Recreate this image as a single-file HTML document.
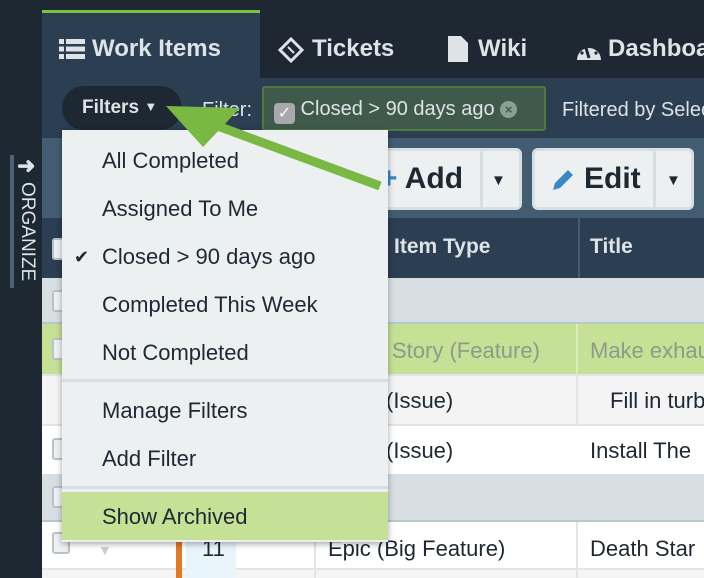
<!DOCTYPE html>
<html><head><style>
*{margin:0;padding:0;box-sizing:border-box}
html,body{width:704px;height:578px;overflow:hidden}
body{background:#1e2832;font-family:"Liberation Sans",Arial,sans-serif}
#w{position:relative;width:704px;height:578px;overflow:hidden}
.a{position:absolute}
.tab{position:absolute;top:35px;font-size:24px;font-weight:bold;color:#dde3e6;white-space:nowrap}
.mi{position:absolute;left:102px;font-size:22px;color:#1e2832;white-space:nowrap}
.cell{position:absolute;font-size:22px;white-space:nowrap;color:#1e2832}
.cb{position:absolute;left:52px;width:18px;height:22px;border:2px solid #b9c2c7;border-radius:3px;background:#eef1f2}
</style></head><body><div id="w">
<div class="a" style="left:10px;top:155px;width:4px;height:133px;background:#4a6478"></div>
<div class="a" style="left:17px;top:153px;font-size:22px;color:#dde3e6;font-weight:bold">➜</div>
<div class="a" style="left:14px;top:182px;width:24px;transform-origin:0 0;transform:translate(24px,0) rotate(90deg);font-size:19px;color:#dde3e6;white-space:nowrap">ORGANIZE</div>

<div class="a" style="left:42px;top:10px;width:218px;height:68px;background:#2b3e52;border-top:3px solid #7bc143"></div>
<svg class="a" style="left:59px;top:39px" width="26" height="20"><g fill="#dde3e6"><rect x="0" y="0" width="5" height="5"/><rect x="7" y="0" width="19" height="5"/><rect x="0" y="7.5" width="5" height="5"/><rect x="7" y="7.5" width="19" height="5"/><rect x="0" y="15" width="5" height="5"/><rect x="7" y="15" width="19" height="5"/></g></svg>
<div class="tab" style="left:92px">Work Items</div>
<svg class="a" style="left:278px;top:37px" width="26" height="26"><path d="M13 2 L24 13 L13 24 L2 13 Z" fill="none" stroke="#dde3e6" stroke-width="3"/><path d="M10 10 L16 16" stroke="#dde3e6" stroke-width="2"/></svg>
<div class="tab" style="left:312px">Tickets</div>
<svg class="a" style="left:448px;top:36px" width="20" height="26"><path d="M0 0 H13 L20 7 V26 H0 Z" fill="#dde3e6"/></svg>
<div class="tab" style="left:478px">Wiki</div>
<svg class="a" style="left:576px;top:39px" width="26" height="22"><path d="M1 21 A12 12 0 1 1 25 21 Z" fill="#dde3e6"/><path d="M13 19 L10 9" stroke="#1e2832" stroke-width="3"/><circle cx="6" cy="14" r="1.6" fill="#1e2832"/><circle cx="20" cy="14" r="1.6" fill="#1e2832"/><circle cx="17" cy="7" r="1.6" fill="#1e2832"/></svg>
<div class="tab" style="left:608px">Dashboards</div>

<div class="a" style="left:42px;top:78px;width:662px;height:60px;background:#2b3e52"></div>
<div class="a" style="left:62px;top:86px;width:120px;height:44px;background:#1e2832;border-radius:22px;color:#dde3e6;font-weight:bold;font-size:19px;padding:11px 0 0 20px">Filters <span style="font-size:13px;vertical-align:2px">▼</span></div>
<div class="a" style="left:202px;top:99px;font-size:20px;color:#dde3e6">Filter:</div>
<div class="a" style="left:262px;top:86px;width:284px;height:45px;background:#3f5a4a;border:2px solid #4e7a3e;border-radius:3px;color:#dde3e6;font-size:20px;padding:10px 0 0 10px;white-space:nowrap"><span style="display:inline-block;width:21px;height:21px;background:#a9a9ad;border-radius:4px;color:#fff;font-size:16px;text-align:center;line-height:21px;vertical-align:-3px">✓</span> Closed &gt; 90 days ago <span style="display:inline-block;width:17px;height:17px;border-radius:50%;background:#8aa092;color:#3f5a4a;font-size:13px;text-align:center;line-height:17px;font-weight:bold;vertical-align:1px">×</span></div>
<div class="a" style="left:562px;top:99px;font-size:20px;color:#dde3e6;white-space:nowrap">Filtered by Selection</div>

<div class="a" style="left:42px;top:138px;width:662px;height:80px;background:#425d72"></div>
<div class="a" style="left:330px;top:148px;width:192px;height:62px;background:#edf0f1;border:3px solid #d7dfe2;border-radius:6px"></div>
<div class="a" style="left:480px;top:151px;width:3px;height:56px;background:#d7dfe2"></div>
<div class="a" style="left:380px;top:162px;font-size:30px;font-weight:bold;color:#1e2832"><span style="color:#3a87c8">+</span> Add</div>
<div class="a" style="left:491px;top:172px;font-size:15px;color:#1e2832">▼</div>
<div class="a" style="left:532px;top:148px;width:162px;height:62px;background:#edf0f1;border:3px solid #d7dfe2;border-radius:6px"></div>
<div class="a" style="left:653px;top:151px;width:3px;height:56px;background:#d7dfe2"></div>
<svg class="a" style="left:551px;top:168px" width="24" height="24"><path d="M2 22 L4 15 L17 2 L22 7 L9 20 Z" fill="#3a87c8"/></svg>
<div class="a" style="left:584px;top:162px;font-size:30px;font-weight:bold;color:#1e2832">Edit</div>
<div class="a" style="left:666px;top:172px;font-size:15px;color:#1e2832">▼</div>

<div class="a" style="left:42px;top:218px;width:662px;height:60px;background:#2b3e52"></div>
<div class="a" style="left:578px;top:218px;width:2px;height:60px;background:#425d72"></div>
<div class="a" style="left:394px;top:235px;font-size:21px;font-weight:bold;color:#dde3e6">Item Type</div>
<div class="a" style="left:590px;top:235px;font-size:21px;font-weight:bold;color:#dde3e6">Title</div>
<div class="cb" style="top:238px"></div>

<div class="a" style="left:42px;top:278px;width:662px;height:46px;background:#d7dfe2;border-bottom:2px solid #b9c6cc"></div>
<div class="a" style="left:42px;top:324px;width:662px;height:52px;background:#c5e196;border-bottom:2px solid #dfe5e8"></div>
<div class="a" style="left:576px;top:324px;width:2px;height:52px;background:#dcecc0"></div>
<div class="cell" style="left:392px;top:338px;color:#8e9a8a">Story (Feature)</div>
<div class="cell" style="left:590px;top:338px;color:#8e9a8a">Make exhaust</div>
<div class="a" style="left:42px;top:376px;width:662px;height:50px;background:#f4f4f4;border-bottom:2px solid #dfe5e8"></div>
<div class="a" style="left:576px;top:376px;width:2px;height:98px;background:#e2e6e8"></div>
<div class="cell" style="left:386px;top:388px">(Issue)</div>
<div class="cell" style="left:610px;top:388px">Fill in turbo</div>
<div class="a" style="left:42px;top:426px;width:662px;height:48px;background:#fff"></div>
<div class="cell" style="left:386px;top:438px">(Issue)</div>
<div class="cell" style="left:590px;top:438px">Install The</div>
<div class="a" style="left:42px;top:474px;width:662px;height:48px;background:#d7dfe2;border-bottom:2px solid #b9c6cc"></div>
<div class="a" style="left:42px;top:522px;width:662px;height:48px;background:#fff;border-bottom:2px solid #dfe5e8"></div>
<div class="a" style="left:42px;top:570px;width:662px;height:8px;background:#f4f4f4"></div>
<div class="a" style="left:176px;top:522px;width:6px;height:56px;background:#e07a25"></div>
<div class="a" style="left:186px;top:522px;width:50px;height:56px;background:#e8f6fb"></div>
<div class="a" style="left:314px;top:522px;width:2px;height:56px;background:#e2e6e8"></div>
<div class="a" style="left:576px;top:522px;width:2px;height:56px;background:#e2e6e8"></div>
<div class="cell" style="left:202px;top:536px">11</div>
<div class="cell" style="left:328px;top:536px">Epic (Big Feature)</div>
<div class="cell" style="left:590px;top:536px">Death Star</div>
<div class="cb" style="top:290px"></div>
<div class="cb" style="top:338px"></div>
<div class="cb" style="top:438px"></div>
<div class="cb" style="top:486px"></div>
<div class="cb" style="top:532px"></div>
<div class="a" style="left:98px;top:542px;font-size:14px;color:#c8cfd3">▼</div>

<div class="a" style="left:62px;top:130px;width:326px;height:412px;background:#edf0f1;box-shadow:0 2px 6px rgba(0,0,0,.35)"></div>
<div class="mi" style="top:148px">All Completed</div>
<div class="mi" style="top:196px">Assigned To Me</div>
<div class="a" style="left:74px;top:247px;font-size:18px;color:#1e2832">✔</div>
<div class="mi" style="top:244px">Closed &gt; 90 days ago</div>
<div class="mi" style="top:292px">Completed This Week</div>
<div class="mi" style="top:340px">Not Completed</div>
<div class="a" style="left:62px;top:379px;width:326px;height:3px;background:#d7dfe2"></div>
<div class="mi" style="top:398px">Manage Filters</div>
<div class="mi" style="top:446px">Add Filter</div>
<div class="a" style="left:62px;top:486px;width:326px;height:3px;background:#d7dfe2"></div>
<div class="a" style="left:62px;top:492px;width:326px;height:48px;background:#c5e196"></div>
<div class="mi" style="top:504px">Show Archived</div>

<svg class="a" style="left:0;top:0" width="704" height="578">
<line x1="380" y1="186" x2="215" y2="125" stroke="#78b843" stroke-width="9"/>
<polygon points="166,106 240,108 203,147" fill="#78b843"/>
</svg>
</div></body></html>
